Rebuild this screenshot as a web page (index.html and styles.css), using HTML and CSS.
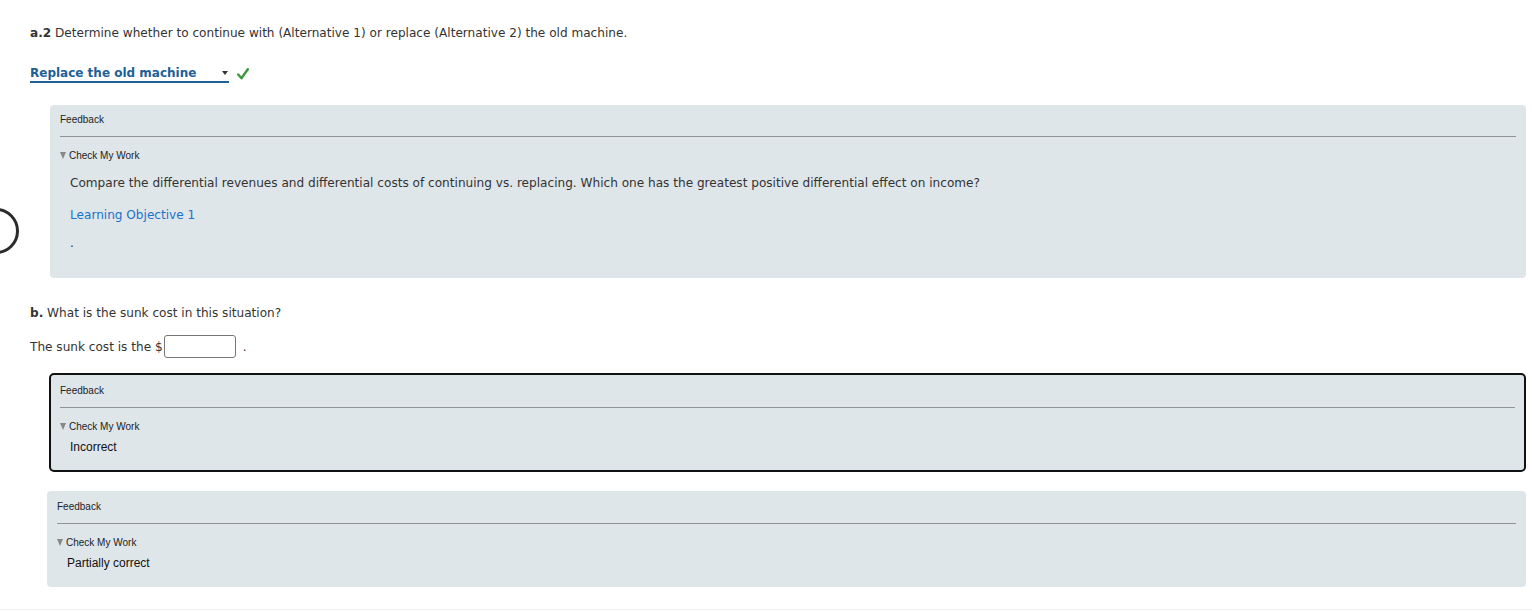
FILE: index.html
```html
<!DOCTYPE html>
<html>
<head>
<meta charset="utf-8">
<link rel="stylesheet" href="styles.css">
</head>
<body>
<div class="nav-circle"></div>
<main class="page">
  <p class="question"><b>a.2</b> Determine whether to continue with (Alternative 1) or replace (Alternative 2) the old machine.</p>
  <div class="answer-row">
    <span class="select">Replace the old machine<span class="caret"></span></span>
    <svg class="check" width="12" height="12" viewBox="0 0 12 12"><path d="M1.2 6.5 L4.5 10.3 L10.8 1.2" fill="none" stroke="#3c9a3c" stroke-width="2.4" stroke-linecap="round" stroke-linejoin="round"/></svg>
  </div>
  <section class="fb fb-1">
    <div class="fb-title">Feedback</div>
    <div class="fb-rule"></div>
    <div class="fb-toggle"><span class="tri"></span>Check My Work</div>
    <div class="fb-body">
      <p class="fb-text">Compare the differential revenues and differential costs of continuing vs. replacing. Which one has the greatest positive differential effect on income?</p>
      <p class="fb-link">Learning Objective 1</p>
      <p class="fb-dot">.</p>
    </div>
  </section>
  <p class="question q-b"><b>b.</b> What is the sunk cost in this situation?</p>
  <div class="sunk-row">The sunk cost is the $<span class="input"></span><span class="period">.</span></div>
  <section class="fb fb-2">
    <div class="fb-title">Feedback</div>
    <div class="fb-rule"></div>
    <div class="fb-toggle"><span class="tri"></span>Check My Work</div>
    <div class="fb-result">Incorrect</div>
  </section>
  <section class="fb fb-3">
    <div class="fb-title">Feedback</div>
    <div class="fb-rule"></div>
    <div class="fb-toggle"><span class="tri"></span>Check My Work</div>
    <div class="fb-result">Partially correct</div>
  </section>
</main>
<div class="bottom-line"></div>
</body>
</html>
```

FILE: styles.css
```css
html, body {
  margin: 0;
  padding: 0;
  background: #fff;
}
body {
  font-family: "DejaVu Sans", Verdana, sans-serif;
  font-size: 12.1px;
  color: #333;
  height: 611px;
  overflow: hidden;
  position: relative;
}
.nav-circle {
  position: absolute;
  left: -27px;
  top: 208px;
  width: 46px;
  height: 46px;
  border: 3px solid #2b2b2b;
  border-radius: 50%;
  box-sizing: border-box;
}
.page {
  padding: 25px 6px 0 30px;
}
.question {
  margin: 0;
  line-height: 16px;
}
.question b {
  color: #333;
}
.answer-row {
  margin-top: 24px;
  display: flex;
  align-items: center;
  gap: 8px;
  height: 18px;
}
.select {
  display: inline-flex;
  align-items: center;
  justify-content: space-between;
  width: 199px;
  box-sizing: border-box;
  font-weight: bold;
  font-size: 12px;
  color: #1e5f98;
  border-bottom: 2px solid #1e5f98;
  line-height: 16px;
  padding-right: 1px;
}
.caret {
  width: 0;
  height: 0;
  border-left: 3px solid transparent;
  border-right: 3px solid transparent;
  border-top: 4px solid #333;
}
.check {
  display: block;
}
.fb {
  background: #dfe6ea;
  border-radius: 4px;
  font-family: "Liberation Sans", Arial, sans-serif;
  color: #222;
}
.fb-1 {
  margin: 22px 0 0 20px;
  padding: 9px 10px 0 10px;
  height: 173px;
  box-sizing: border-box;
}
.fb-title {
  font-size: 10px;
  line-height: 11px;
}
.fb-rule {
  margin-top: 11px;
  height: 1px;
  background: #8f9496;
}
.fb-toggle {
  margin-top: 13px;
  font-size: 10px;
  line-height: 11px;
  display: flex;
  align-items: center;
}
.tri {
  width: 0;
  height: 0;
  border-left: 3px solid transparent;
  border-right: 3px solid transparent;
  border-top: 7px solid #888;
  margin-right: 3px;
  margin-top: -1px;
}
.fb-body {
  padding-left: 10px;
  font-family: "DejaVu Sans", Verdana, sans-serif;
  font-size: 12.1px;
  color: #333;
}
.fb-body p {
  margin: 0;
  line-height: 16px;
}
.fb-text {
  padding-top: 14px;
}
.fb-link {
  color: #1a73c8;
  padding-top: 16px;
}
.fb-dot {
  padding-top: 12px;
}
.q-b {
  margin-top: 27px;
}
.sunk-row {
  margin-top: 14px;
  display: flex;
  align-items: center;
  height: 23px;
}
.input {
  display: inline-block;
  width: 72px;
  height: 23px;
  box-sizing: border-box;
  border: 1px solid #777;
  border-radius: 3px;
  background: #fff;
  margin-left: 1px;
}
.period {
  margin-left: 7px;
}
.fb-2 {
  margin: 15px 0 0 19px;
  border: 2px solid #111;
  border-radius: 5px;
  padding: 10px 9px 0 9px;
  height: 99px;
  box-sizing: border-box;
}
.fb-result {
  padding-left: 10px;
  margin-top: 8px;
  font-size: 12px;
  line-height: 14px;
  color: #111;
}
.fb-3 {
  margin: 19px 0 0 17px;
  padding: 10px 10px 0 10px;
  height: 96px;
  box-sizing: border-box;
}
.bottom-line {
  position: absolute;
  left: 0;
  right: 0;
  bottom: 1px;
  height: 1px;
  background: #eeeeee;
}
```
